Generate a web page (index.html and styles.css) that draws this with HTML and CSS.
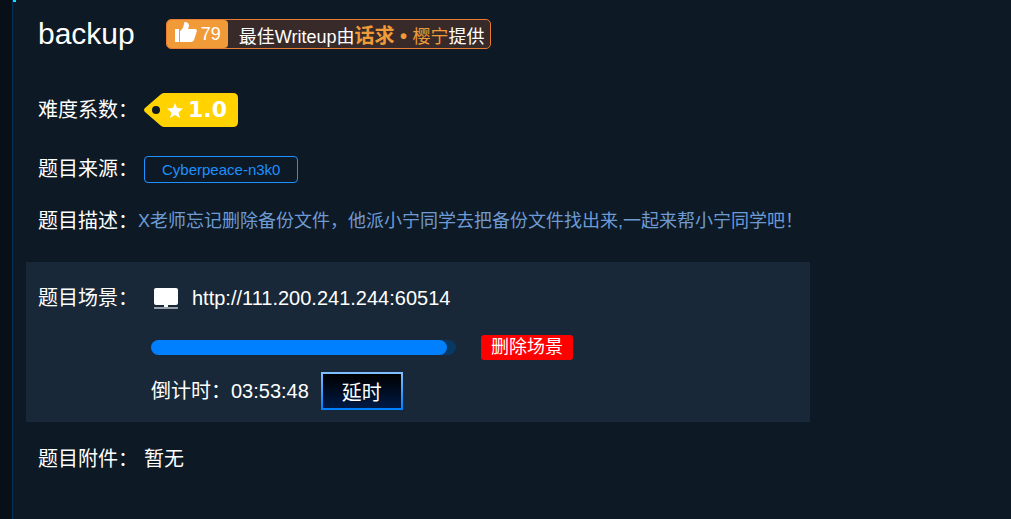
FILE: index.html
```html
<!DOCTYPE html>
<html lang="zh-CN">
<head>
    <meta charset="UTF-8">
    <meta name="viewport" content="width=device-width, initial-scale=1.0">
    <title>backup</title>
    <link rel="stylesheet" href="styles.css">
</head>
<body>
    <main class="panel">
        <header class="title-row">
            <h1>backup</h1>
            <div class="writeup">
                <button class="like" type="button">
                    <svg class="thumb" viewBox="0 0 22 21" aria-hidden="true">
                        <path d="M0 7h4v13H0z"/>
                        <path d="M5 9q4-3 4-8 0-1 2-1 3 1 3 4l-1 3h7q2 0 2 2l-3 9q-1 2-3 2H5z"/>
                    </svg>
                    <span>79</span>
                </button>
                <p class="writeup-text">最佳Writeup由<a href="#" class="team">话求 • </a><a href="#" class="author">樱宁</a>提供</p>
            </div>
        </header>

        <section class="row row-level">
            <span class="label">难度系数：</span>
            <div class="level">
                <svg class="tag" viewBox="0 0 94 34" aria-hidden="true">
                    <path class="tag-body" fill-rule="evenodd" d="M20 0h69q5 0 5 5v24q0 5-5 5H20q-2 0-4-2L1 19q-2-2 0-4L16 2q2-2 4-2zM12 13a4 4 0 1 0 0 8 4 4 0 0 0 0-8z"/>
                    <path class="tag-star" d="M31 10l2 5 6 .5-4.500 4 1.500 5.500-5-3-5 3 1.500-5.500-4.500-4 6-.5z"/>
                </svg>
                <span class="level-value">1.0</span>
            </div>
        </section>

        <section class="row row-source">
            <span class="label">题目来源：</span>
            <a href="#" class="source">Cyberpeace-n3k0</a>
        </section>

        <section class="row row-desc">
            <span class="label">题目描述：</span>
            <p class="desc">X老师忘记删除备份文件，他派小宁同学去把备份文件找出来,一起来帮小宁同学吧！</p>
        </section>

        <section class="scene">
            <span class="label">题目场景：</span>
            <div class="scene-body">
                <div class="address">
                    <svg class="monitor" viewBox="0 0 24 21" aria-hidden="true">
                        <rect width="24" height="17" rx="2"/>
                        <path d="M10 17h4v3h-4z"/>
                        <path class="base" d="M0 19h24v2H0z"/>
                    </svg>
                    <a href="http://111.200.241.244:60514">http://111.200.241.244:60514</a>
                </div>
                <div class="time-left">
                    <div class="bar" role="progressbar" aria-label="倒计时" aria-valuenow="97" aria-valuemin="0" aria-valuemax="100">
                        <div class="bar-fill" style="width: 97%"></div>
                    </div>
                    <button class="delete" type="button">删除场景</button>
                </div>
                <div class="countdown">
                    <span>倒计时：03:53:48</span>
                    <button class="delay" type="button">延时</button>
                </div>
            </div>
        </section>

        <section class="row row-file">
            <span class="label">题目附件：</span>
            <span class="file">暂无</span>
        </section>
    </main>
</body>
</html>
```
FILE: styles.css
```css
:root {
    --page: #090f17;
    --panel: #0d1925;
    --scene: #192838;
    --blue: #0080ff;
    --orange: #f19a38;
}
* {
    box-sizing: border-box;
}
body {
    margin: 0;
    padding-left: 12px;
    background-color: var(--page);
    color: #ffffff;
    font-family: "Liberation Sans", "Noto Sans CJK SC", sans-serif;
    font-size: 20px;
    line-height: 28px;
}
h1, p {
    margin: 0;
    font-weight: normal;
}
a {
    color: inherit;
    text-decoration: none;
}
button {
    padding: 0;
    border: none;
    color: #ffffff;
    font-family: inherit;
    cursor: pointer;
}
.panel {
    min-height: 100vh;
    padding: 12px 0 0 13px;
    border-left: 1px solid #043159;
    background:
        linear-gradient(#00e5ff, #00e5ff) 0 0 / 3px 2px no-repeat,
        var(--panel);
}

/* title */
.title-row {
    display: flex;
    align-items: center;
    gap: 31px;
    padding-left: 12px;
}
h1 {
    font-size: 30px;
    line-height: 44px;
}
.writeup {
    display: flex;
    height: 30px;
    padding-right: 5px;
    border: 1px solid #ea7b35;
    border-radius: 5px;
    background-color: #382a29;
}
.like {
    display: flex;
    align-items: center;
    gap: 4px;
    width: 61px;
    padding-left: 8px;
    border-radius: 4px;
    background-color: var(--orange);
    font-size: 18px;
}
.thumb {
    width: 22px;
    height: 21px;
    margin-bottom: 4px;
    fill: #ffffff;
}
.writeup-text {
    padding-left: 11px;
    font-size: 18px;
    line-height: 32px;
}
.team {
    color: var(--orange);
    font-size: 20px;
    font-weight: bold;
}
.author {
    color: var(--orange);
}

/* rows */
.row {
    display: flex;
    align-items: center;
    padding-left: 12px;
}
.label {
    flex: none;
    width: 106px;
}
.row-level {
    padding-top: 37px;
}
.level {
    display: grid;
    align-items: center;
}
.tag, .level-value {
    grid-area: 1 / 1;
}
.tag {
    width: 94px;
    height: 34px;
}
.tag-body {
    fill: #ffd200;
}
.tag-star {
    fill: #ffffff;
}
.level-value {
    padding-left: 44px;
    font-family: "DejaVu Sans", sans-serif;
    font-size: 22px;
    font-weight: bold;
}
.row-source {
    padding-top: 28px;
}
.source {
    padding: 0 17px;
    border: 1px solid #1e90ff;
    border-radius: 4px;
    color: #1e90ff;
    font-size: 15px;
    line-height: 25px;
}
.row-desc {
    padding-top: 24px;
}
.row-desc .label {
    width: 100px;
}
.desc {
    color: #6e9bd4;
    font-size: 18px;
}

/* scene */
.scene {
    display: flex;
    width: 100%;
    max-width: 784px;
    margin-top: 27px;
    padding: 22px 12px 12px;
    background-color: var(--scene);
}
.scene-body {
    flex: 1;
    padding-left: 7px;
}
.address {
    display: flex;
    align-items: center;
    gap: 14px;
    padding-left: 3px;
}
.monitor {
    width: 24px;
    height: 21px;
    fill: #ffffff;
}
.monitor .base {
    fill: #9aa1a9;
}
.time-left {
    display: flex;
    align-items: center;
    gap: 25px;
    padding-top: 23px;
}
.bar {
    flex: 0 1 305px;
    height: 15px;
    border-radius: 8px;
    background-color: #073964;
}
.bar-fill {
    height: 100%;
    border-radius: 8px;
    background-color: var(--blue);
}
.delete {
    padding: 0 10px;
    border-radius: 3px;
    background-color: #ff0000;
    font-size: 18px;
    line-height: 25px;
}
.countdown {
    display: flex;
    align-items: center;
    gap: 12px;
    padding-top: 12px;
}
.delay {
    width: 82px;
    height: 38px;
    border: 2px solid;
    border-image: linear-gradient(#7fbfff, #0080ff) 1;
    background: linear-gradient(#000000, #001a44);
    font-size: 20px;
}

/* attachment */
.row-file {
    padding-top: 23px;
}
```
